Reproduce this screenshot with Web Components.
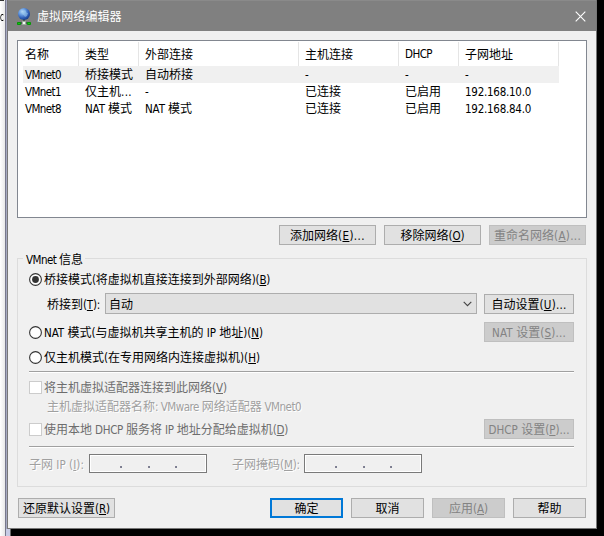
<!DOCTYPE html>
<html lang="zh-CN">
<head>
<meta charset="utf-8">
<title>虚拟网络编辑器</title>
<style>
html,body{margin:0;width:604px;height:536px;overflow:hidden;background:#000}
body{font:12px/16px "DejaVu Sans Condensed","Noto Sans CJK SC",sans-serif;color:#000}
</style>
</head>
<body>
<network-editor></network-editor>
<script>
const define = (name, markup, extra) => {
  const t = document.createElement('template');
  t.innerHTML = markup;
  customElements.define(name, class extends HTMLElement {
    connectedCallback() {
      if (this.shadowRoot) return;
      this.attachShadow({mode:'open'}).append(t.content.cloneNode(true));
      if (extra) extra(this, this.shadowRoot);
    }
  });
};

/* Text with smaller Latin runs; "&" marks the mnemonic letter, "w" the run width. */
define('ui-text', `<style>
:host{display:inline-block;white-space:pre;line-height:16px;height:16px;flex:none}
.l{font-family:"DejaVu Sans Condensed","DejaVu Sans",sans-serif;font-size:11.5px;font-stretch:condensed}
.c{font-family:"Noto Sans CJK SC",sans-serif;font-size:12px}
u{text-underline-offset:1px;text-decoration-thickness:1px;text-decoration-skip-ink:none}
</style><span id="t"></span>`, (el, root) => {
  const box = root.getElementById('t');
  const text = el.getAttribute('text');
  let latin = 0;
  for (const run of text.match(/[\x00-\x7f]+|[^\x00-\x7f]+/g)) {
    const s = document.createElement('span');
    s.className = /[\x00-\x7f]/.test(run) ? 'l' : 'c';
    const i = run.indexOf('&');
    if (i < 0) s.textContent = run;
    else {
      const u = document.createElement('u');
      u.textContent = run[i + 1];
      s.append(run.slice(0, i), u, run.slice(i + 2));
    }
    if (s.className === 'l') latin += s.textContent.length;
    box.append(s);
  }
  const w = +el.getAttribute('w');
  if (w && latin) {
    const d = (w - box.getBoundingClientRect().width) / latin;
    box.querySelectorAll('.l').forEach(s => s.style.letterSpacing = d + 'px');
  }
});

define('ui-button', `<style>
:host{display:flex;box-sizing:border-box;width:97px;height:20px;flex:none;align-items:center;justify-content:center;background:#e1e1e1;border:1px solid #adadad;color:#000}
:host([disabled]){background:#ccc;border-color:#bfbfbf;color:#838383}
:host([primary]){border:2px solid #0078d7}
:host([mid]){width:90px}
:host([small]){width:73px}
</style><slot></slot>`);

define('ui-radio', `<style>
:host{display:flex;align-items:center;gap:2px;height:16px}
svg{flex:none}circle.dot{display:none}:host([checked]) .dot{display:block}
</style><svg width="13" height="13" viewBox="0 0 13 13"><circle cx="6.5" cy="6.5" r="5.9" fill="#fff" stroke="#333" stroke-width="1.1"/><circle class="dot" cx="6.5" cy="6.5" r="3.4" fill="#333"/></svg><slot></slot>`);

define('ui-check', `<style>
:host{display:flex;align-items:center;gap:2px;height:16px;color:#6d6d6d}
i{box-sizing:border-box;width:13px;height:13px;background:#fff;border:1px solid #ccc;flex:none}
</style><i></i><slot></slot>`);

define('ui-rule', `<style>:host{display:block;height:1px;background:#a0a0a0;border-bottom:1px solid #fff;width:545px}</style>`);

define('ui-combo', `<style>
:host{display:flex;box-sizing:border-box;width:372px;height:21px;align-items:center;justify-content:space-between;border:1px solid #adadad;background:#e1e1e1;padding:0 4px 0 3px;flex:none}
</style><slot></slot><svg width="9" height="6" viewBox="0 0 9 6"><path d="M.7.8 4.5 4.6 8.3.8" fill="none" stroke="#444" stroke-width="1.1"/></svg>`);

define('ip-field', `<style>
:host{display:flex;box-sizing:border-box;width:118px;height:19px;border:1px solid #7a7a7a;background:#f0f0f0;box-shadow:inset 0 0 0 1px #fff;padding:11px 29px 0 30px;justify-content:space-between;flex:none}
i{width:2px;height:2px;background:linear-gradient(90deg,#8d8093,#707f91)}
</style><i></i><i></i><i></i>`);

define('net-table', `<style>
:host{display:block;box-sizing:border-box;width:570px;height:178px;border:1px solid #828790;background:#fff;padding:1px 0 0 5px}
.r{display:grid;grid-template-columns:56px 60px 160px 100px 60px 100px;height:17px;width:536px;align-items:center}
.h{height:24px}
.h div{box-sizing:border-box;height:24px;border-right:1px solid #e5e5e5;display:flex;align-items:center}
.r div{padding-left:6px}
.r div:first-child{padding-left:2px}
.s{background:#f0f0f0}
</style><section></section>`, (el, root) => {
  const rows = [
    ['名称','类型','外部连接','主机连接','DHCP:27','子网地址'],
    ['VMnet0:36','桥接模式','自动桥接','-','-','-'],
    ['VMnet1:36','仅主机...:47','-','已连接','已启用','192.168.10.0:66'],
    ['VMnet8:36','NAT 模式:47','NAT 模式:47','已连接','已启用','192.168.84.0:66']];
  root.querySelector('section').innerHTML = rows.map((r, i) =>
    `<div class="r ${i ? i === 1 ? 's' : '' : 'h'}" style="padding:0">` + r.map(c => {
      const [t, w] = c.split(':');
      return `<div><ui-text text="${t}" w="${w || 0}"></ui-text></div>`;
    }).join('') + '</div>').join('');
});

define('title-bar', `<style>
:host{display:flex;height:31px;box-sizing:border-box;background:#808080;border-top:1px solid #8a8a8a;color:#fff;align-items:center;padding:0 10px 0 9px}
.x{margin-left:auto}ui-text{margin-left:6px;margin-top:-1px;letter-spacing:.1px}
</style><svg width="14" height="17" viewBox="0 0 14 17"><defs><radialGradient id="g" cx=".35" cy=".3" r=".75"><stop offset="0" stop-color="#b4d8f6"/><stop offset=".35" stop-color="#6a9fe2"/><stop offset=".7" stop-color="#2f5fb8"/><stop offset="1" stop-color="#173c86"/></radialGradient></defs><circle cx="7" cy="6" r="6" fill="url(#g)"/><path d="M6.5 2.500q2-1 2.500 1t2 1.500l-1 3-2 1q-1-2-3-3z" fill="#a8d4ef" opacity=".5"/><path d="M7 11.500v3M1 15h12" stroke="#173b2c"/><path d="M.5 14.500h3v2h-3zM10.500 14.500h3v2h-3z" fill="#15c315" stroke="#079507"/><path d="M5.500 13.500h3v3h-3z" fill="#f4f8f4" stroke="#9fb09f"/></svg>
<ui-text text="虚拟网络编辑器"></ui-text>
<svg class="x" width="11" height="11" viewBox="0 0 11 11"><path d="M.7.7 10.300 10.300M10.300.7.7 10.300" stroke="#fff" stroke-width="1.100"/></svg>`);

define('info-group', `<style>
:host{display:block;position:relative;box-sizing:border-box;width:570px;height:229px;border:1px solid #dcdcdc;padding:12px 0 0 11px}
.legend{position:absolute;left:5px;top:-8px;background:#f0f0f0;padding:0 2px 0 3px;height:16px}
.row{display:flex;align-items:center}
.push{margin-left:auto;margin-right:12px}
.g{color:#a0a0a0;text-shadow:1px 1px 0 #fff}
</style>
<ui-text class="legend" text="VMnet 信息" w="57"></ui-text>
<ui-radio checked><ui-text text="桥接模式(将虚拟机直接连接到外部网络)(&amp;B)" w="226"></ui-text></ui-radio>
<div class="row" style="height:21px;margin-top:6px;padding-left:18px"><ui-text text="桥接到(&amp;T):" w="53" style="margin-right:5px"></ui-text><ui-combo><ui-text text="自动"></ui-text></ui-combo><ui-button mid class="push" style="margin-top:1px"><ui-text text="自动设置(&amp;U)..." w="75"></ui-text></ui-button></div>
<div class="row" style="height:20px;margin-top:8px"><ui-radio><ui-text text="NAT 模式(与虚拟机共享主机的 IP 地址)(&amp;N)" w="219"></ui-text></ui-radio><ui-button mid disabled class="push"><ui-text text="NAT 设置(&amp;S)..." w="74"></ui-text></ui-button></div>
<ui-radio style="margin-top:7px"><ui-text text="仅主机模式(在专用网络内连接虚拟机)(&amp;H)" w="216"></ui-text></ui-radio>
<ui-rule style="margin-top:6px"></ui-rule>
<ui-check style="margin-top:6px"><ui-text text="将主机虚拟适配器连接到此网络(&amp;V)" w="183"></ui-text></ui-check>
<ui-text class="g" style="margin:3px 0 0 18px;display:block" text="主机虚拟适配器名称: VMware 网络适配器 VMnet0" w="254"></ui-text>
<div class="row" style="height:20px;margin-top:5px"><ui-check><ui-text text="使用本地 DHCP 服务将 IP 地址分配给虚拟机(&amp;D)" w="244"></ui-text></ui-check><ui-button mid disabled class="push"><ui-text text="DHCP 设置(&amp;P)..." w="81"></ui-text></ui-button></div>
<ui-rule style="margin-top:7px"></ui-rule>
<div class="row" style="height:19px;margin-top:6px"><ui-text class="g" style="width:60px" text="子网 IP (&amp;I):" w="55"></ui-text><ip-field></ip-field><ui-text class="g" style="width:72px;margin-left:25px" text="子网掩码(&amp;M):" w="68"></ui-text><ip-field></ip-field></div>`);

define('network-editor', `<style>
:host{display:flex;width:604px;height:536px;background:#000;overflow:hidden}
.side{width:5px;background:linear-gradient(90deg,#fff,#e8e8e8);position:relative;flex:none}
.mark{position:absolute;left:0;top:9px;font:12px/16px "DejaVu Sans Condensed",sans-serif;transform:scaleX(.65);transform-origin:0 0}
.edge{width:2px;background:#a6a9c2;border-left:1px solid #77798c;box-sizing:border-box;flex:none}
main{box-sizing:border-box;width:590px;height:529px;background:#f0f0f0;border:solid #777;border-width:0 1px 1px 1px;flex:none}
.pad{padding:9px 0 0 9px}
.b{display:flex;gap:8px}
.shadow{position:absolute;left:5px;top:529px;width:6px;height:7px;background:linear-gradient(90deg,#77798c 1px,#c7cbe5 1px 5px,#666 5px)}
.dash{position:absolute;left:0;top:0;width:4px;height:1px;background:#333}
</style>
<div class="side"><i class="dash"></i><span class="mark">c</span></div><div class="edge"></div>
<main><title-bar></title-bar><div class="pad"><net-table></net-table>
<div class="b" style="margin:7px 0 13px 262px"><ui-button><ui-text text="添加网络(&amp;E)..." w="75"></ui-text></ui-button><ui-button><ui-text text="移除网络(&amp;O)" w="64"></ui-text></ui-button><ui-button disabled><ui-text text="重命名网络(&amp;A)..." w="87"></ui-text></ui-button></div>
<info-group></info-group>
<div class="b" style="margin:11px 0 0 1px"><ui-button style="margin-right:147px"><ui-text text="还原默认设置(&amp;R)" w="87"></ui-text></ui-button><ui-button small primary><ui-text text="确定"></ui-text></ui-button><ui-button small><ui-text text="取消"></ui-text></ui-button><ui-button small disabled><ui-text text="应用(&amp;A)" w="39"></ui-text></ui-button><ui-button small><ui-text text="帮助"></ui-text></ui-button></div>
</div></main><div class="shadow"></div>`);
</script>
</body>
</html>
